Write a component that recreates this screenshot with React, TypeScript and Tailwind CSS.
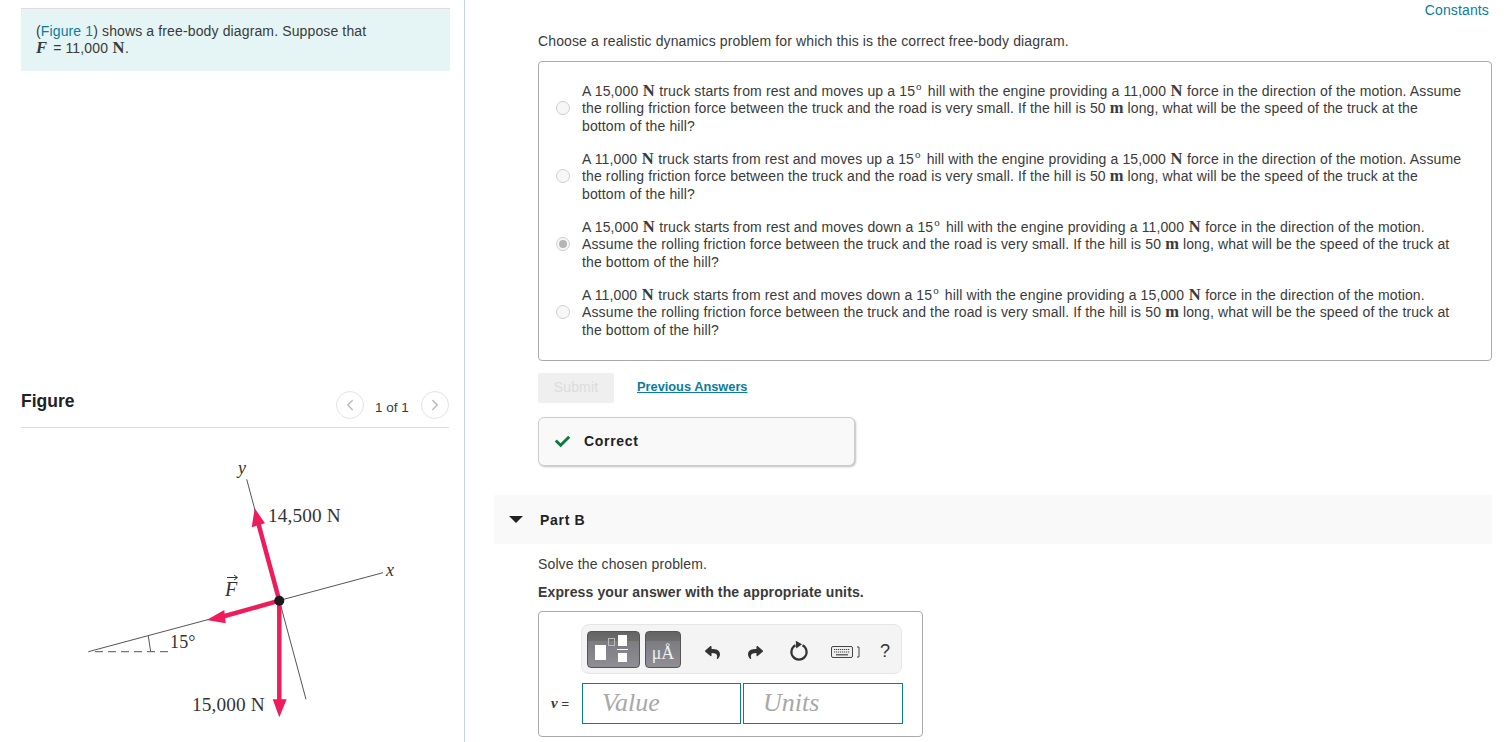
import React from 'react';
import { FaCheck, FaReply, FaShare } from 'react-icons/fa';
import { ChevronLeft, ChevronRight } from 'lucide-react';

const mathClass = "font-['Liberation_Serif',serif] font-semibold text-[16.5px] leading-[0] tracking-normal";
const toolButton = "bg-[linear-gradient(#646464_0,#6e6e6e_26%,#7c7c82_27%,#8e8e94_100%)] border border-[#555] rounded-[4px] h-[37px]";

function N() {
  return <span className={`${mathClass} mx-[0.5px]`}>N</span>;
}

function M() {
  return <span className={mathClass}>m</span>;
}

function Deg() {
  return <sup className="font-['Liberation_Serif',serif] text-[11px] ml-[1px] mr-[2px]">o</sup>;
}

function Choice({ weight, other, dir, selected }: { weight: string; other: string; dir: string; selected?: boolean }) {
  return (
    <div className="flex items-center h-[52.5px]">
      <div className="w-[43px] pl-[17px] shrink-0">
        <div className="w-[14px] h-[14px] rounded-full border border-[#cfcfcf] bg-[#f7f7f7] flex items-center justify-center">
          {selected && <div className="w-[8px] h-[8px] rounded-full bg-[#b5b5b5]" />}
        </div>
      </div>
      <p className="w-[882px] leading-[17.5px] pt-[1px]">
        A {weight} <N /> truck starts from rest and moves {dir} a 15<Deg /> hill with the engine providing a {other} <N /> force in the direction of the motion. Assume the rolling friction force between the truck and the road is very small. If the hill is 50 <M /> long, what will be the speed of the truck at the bottom of the hill?
      </p>
    </div>
  );
}

function PageButton({ children }: { children: React.ReactNode }) {
  return (
    <div className="w-[28px] h-[28px] rounded-full border border-[#e4e4e4] flex items-center justify-center text-[#b4bcc4]">
      {children}
    </div>
  );
}

function FreeBodyDiagram() {
  return (
    <svg width="464" height="314" viewBox="0 428 464 314" className="block">
      <g stroke="#555" strokeWidth="1" fill="none">
        <path d="M246.7 479.3 L306 699.3" />
        <path d="M383 572.7 L88.3 651.7" />
        <path d="M95 651.7 H173" strokeDasharray="8 5" />
        <path d="M148.3 636 L150.7 651.7" />
      </g>
      <g fill="#ee1c5a" stroke="none">
        <path d="M254.7 508.3 L251.7 527.3 L265 523.3 Z" />
        <path d="M206.7 620 L224.3 610 L225.7 623.3 Z" />
        <path d="M279.3 717.3 L272.7 699.3 L286.7 699.3 Z" />
      </g>
      <g stroke="#ee1c5a" strokeWidth="4.5" fill="none">
        <path d="M279.3 600.7 L258.5 524" />
        <path d="M279.3 600.7 L223 616.5" />
        <path d="M279.3 600.7 V701" />
      </g>
      <circle cx="279.3" cy="600.7" r="5" fill="#1a1a1a" />
      <g fontFamily="Liberation Serif, serif" fill="#333" fontSize="19.3">
        <text x="268" y="522">14,500 N</text>
        <text x="192" y="711">15,000 N</text>
        <text x="170" y="648" fontSize="18">15°</text>
        <text x="386" y="576" fontStyle="italic" fontSize="18">x</text>
        <text x="238" y="474" fontStyle="italic" fontSize="18">y</text>
        <text x="225" y="596" fontStyle="italic" fontSize="20">F</text>
      </g>
      <path d="M227 577.5 H237 M234 575 L237.5 577.5 L234 580" stroke="#333" strokeWidth="1" fill="none" />
    </svg>
  );
}

function KeyboardIcon() {
  return (
    <svg width="30" height="16" viewBox="0 0 30 16" className="block">
      <rect x="0.5" y="2.5" width="21" height="11" rx="1.5" fill="#eee" stroke="#444" />
      <path d="M3 5.5 H19 M3 8 H19" stroke="#444" strokeWidth="1.2" strokeDasharray="1.2 0.8" />
      <path d="M5 10.8 H17" stroke="#444" strokeWidth="1.2" />
      <path d="M26 3 H28 V13 H26" stroke="#444" fill="none" />
    </svg>
  );
}

function ResetIcon() {
  return (
    <svg width="20" height="22" viewBox="0 0 20 22" className="block">
      <path d="M13.5 5.2 A7.6 7.6 0 1 1 6.5 5.2" stroke="#333" strokeWidth="2.2" fill="none" />
      <path d="M6.8 0.8 L13 4.2 L7.2 8.4 Z" fill="#333" />
    </svg>
  );
}

export default function App() {
  return (
    <div className="flex h-screen overflow-hidden bg-white text-[14px] tracking-[0.13px] text-[#3a3a3a] font-['Liberation_Sans',Arial,sans-serif]">
      <div className="w-[465px] shrink-0 border-r border-[#c3d3e6] pt-[8px] pr-[14px] pl-[21px]">
        <div className="h-[63px] w-[429px] bg-[#e5f5f6] border-t border-[#dddddd] pt-[14px] pl-[15px] leading-[17px]">
          <p>
            (<span className="text-[#0a7ca0]">Figure 1</span>) shows a free-body diagram. Suppose that
            <br />
            <span className="font-['Liberation_Serif',serif] italic font-semibold text-[16.5px] leading-[0] mr-[2px]">F</span> = 11,000 <N />.
          </p>
        </div>
        <div className="mt-[319px] h-[38px] w-[428px] border-b border-[#dddddd] flex items-start justify-between">
          <h2 className="text-[17.5px] font-bold text-[#222] leading-[20px] mt-[1px] tracking-normal">Figure</h2>
          <div className="flex items-start gap-[11px] mt-[1px]">
            <PageButton><ChevronLeft size={18} strokeWidth={2} /></PageButton>
            <span className="text-[13.5px] w-[35px] tracking-normal mt-[7px]">1 of 1</span>
            <PageButton><ChevronRight size={18} strokeWidth={2} /></PageButton>
          </div>
        </div>
        <div className="-ml-[21px]">
          <FreeBodyDiagram />
        </div>
      </div>

      <div className="flex-1 pl-[73px] pr-[17px]">
        <div className="h-[19px] pt-[2px] pr-[3px] text-right leading-[17px] text-[#0a7ca0]">Constants</div>
        <p className="mt-[14px] leading-[17px]">Choose a realistic dynamics problem for which this is the correct free-body diagram.</p>
        <div className="mt-[11px] h-[300px] border border-[#aaaaaa] rounded-[4px] pt-[20px] flex flex-col gap-[15.5px]">
          <Choice weight="15,000" other="11,000" dir="up" />
          <Choice weight="11,000" other="15,000" dir="up" />
          <Choice weight="15,000" other="11,000" dir="down" selected />
          <Choice weight="11,000" other="15,000" dir="down" />
        </div>

        <div className="mt-[12px] flex items-center gap-[23px]">
          <button className="w-[76px] h-[30px] rounded-[2px] bg-[#efefef] text-[#dcdcdc] pb-[2px]">Submit</button>
          <a className="text-[12.8px] font-bold text-[#0a7ca0] underline tracking-normal pb-[2px]">Previous Answers</a>
        </div>

        <div className="mt-[14px] w-[317px] h-[49px] rounded-[6px] border border-[#cccccc] bg-[#f9f9f9] shadow-[1px_1px_2px_rgba(0,0,0,0.25)] flex items-center pl-[16px] gap-[14px]">
          <FaCheck size={15} className="text-[#0b7b3e]" />
          <span className="font-bold text-[#222] tracking-[0.7px]">Correct</span>
        </div>

        <div className="mt-[29px] -ml-[44px] h-[49px] bg-[#f9f9f9] flex items-center pl-[15px]">
          <div className="w-0 h-0 border-l-[7px] border-r-[7px] border-t-[7px] border-l-transparent border-r-transparent border-t-[#222]" />
          <span className="ml-[17px] font-bold text-[#222] tracking-[0.7px] pt-[1px]">Part B</span>
        </div>

        <p className="mt-[12px] leading-[17px]">Solve the chosen problem.</p>
        <p className="mt-[11px] leading-[17px] font-bold">Express your answer with the appropriate units.</p>

        <div className="mt-[10px] w-[385px] h-[126px] border border-[#aaaaaa] rounded-[4px] pt-[12px]">
          <div className="ml-[42px] w-[321px] h-[50px] bg-[#f4f4f4] border border-[#e6e6e6] rounded-[8px] flex items-center pl-[5px]">
            <div className={`relative w-[53px] ${toolButton}`}>
              <div className="absolute left-[7px] top-[13px] w-[11px] h-[15px] bg-white" />
              <div className="absolute left-[20px] top-[6px] w-[7px] h-[8px] border border-[#bbbbbb]" />
              <div className="absolute left-[30px] top-[3px] w-[9px] h-[11px] bg-white" />
              <div className="absolute left-[29px] top-[17px] w-[11px] h-[1px] bg-white" />
              <div className="absolute left-[30px] top-[21px] w-[9px] h-[9px] bg-white" />
            </div>
            <div className={`ml-[5px] w-[36px] ${toolButton} flex items-end justify-center pb-[4px] font-['Liberation_Serif',serif] text-[18px] leading-[20px] text-[#f0f0f0] tracking-normal`}>
              μÅ
            </div>
            <FaReply size={15} className="ml-[24px] mt-[6px] text-[#333]" />
            <FaShare size={15} className="ml-[28px] mt-[6px] text-[#333]" />
            <div className="ml-[26px] mt-[4px]"><ResetIcon /></div>
            <div className="ml-[22px] mt-[6px]"><KeyboardIcon /></div>
            <span className="ml-[19px] mt-[4px] text-[18px] text-[#333]">?</span>
          </div>
          <div className="mt-[9px] flex items-center">
            <span className="w-[43px] pl-[12px] text-[13px] shrink-0">
              <span className="font-['Liberation_Serif',serif] italic font-semibold text-[15px]">v</span> =
            </span>
            <div className="w-[159px] h-[41px] border border-[#0a7c9c] pl-[19px] pb-[2px] flex items-center font-['Liberation_Serif',serif] italic text-[26px] text-[#a8a8a8] tracking-normal">Value</div>
            <div className="ml-[2px] w-[160px] h-[41px] border border-[#0a7c9c] pl-[19px] pb-[2px] flex items-center font-['Liberation_Serif',serif] italic text-[26px] text-[#a8a8a8] tracking-normal">Units</div>
          </div>
        </div>
      </div>
    </div>
  );
}
